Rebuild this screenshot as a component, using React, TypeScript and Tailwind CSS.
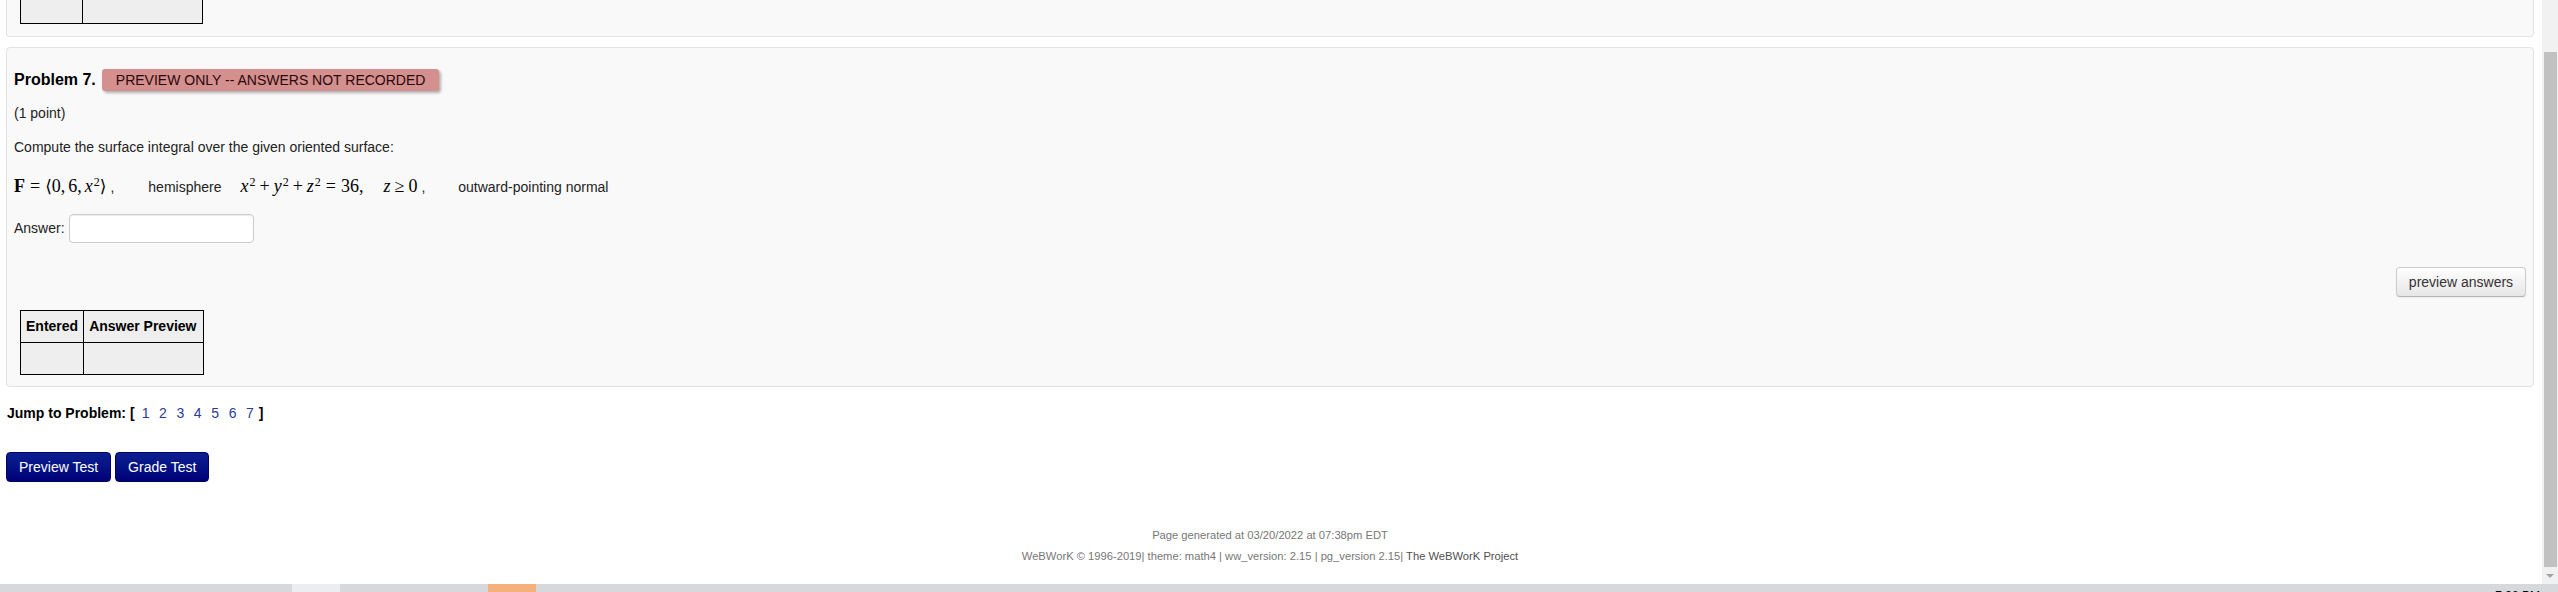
import React from "react";

const mathFont = "font-['Liberation_Serif','DejaVu_Serif',serif] text-[18px] text-black";

function Sq({ v }: { v: string }) {
  return (
    <>
      <i>{v}</i>
      <sup className="ml-[1px] text-[12px]">2</sup>
    </>
  );
}

export default function App() {
  const problems = [1, 2, 3, 4, 5, 6, 7];

  return (
    <div className="w-[2558px] h-[592px] overflow-hidden bg-white flex flex-col font-['Liberation_Sans',Arial,sans-serif] text-[#222]">
      <div className="flex h-[584px]">
        <main className="flex-1 pl-[6px] pr-[8px]">
          {/* tail of the previous problem */}
          <div className="h-[37px] bg-[#f9f9f9] border border-t-0 border-[#e3e3e3] rounded-b-[4px] pl-[13px]">
            <div className="flex">
              <div className="w-[63px] h-[24px] bg-[#eeeeee] border border-t-0 border-black" />
              <div className="w-[120px] h-[24px] bg-[#eeeeee] border border-t-0 border-l-0 border-black" />
            </div>
          </div>

          {/* problem 7 */}
          <div className="mt-[10px] h-[340px] bg-[#f9f9f9] border border-[#e3e3e3] rounded-[4px] px-[7px] pt-[21px]">
            <div className="flex items-center h-[22px]">
              <span className="text-[16px] font-bold text-black">Problem 7.</span>
              <span className="ml-[6px] h-[22px] px-[14px] bg-[#d48f8f] text-[#2a0808] text-[14px] leading-[22px] rounded-[3px] shadow-[2px_2px_3px_rgba(0,0,0,0.3)]">
                PREVIEW ONLY -- ANSWERS NOT RECORDED
              </span>
            </div>

            <div className="mt-[12px] h-[20px] leading-[20px] text-[14px]">(1 point)</div>

            <div className="mt-[14px] h-[20px] leading-[20px] text-[14px]">
              Compute the surface integral over the given oriented surface:
            </div>

            <div className="mt-[17px] h-[24px] leading-[24px] text-[14px] whitespace-nowrap">
              <span className={mathFont}>
                <b className="not-italic">F</b>
                <span className="mx-[5px]">=</span>
                <span className="font-['DejaVu_Serif',serif] text-[17px]">⟨</span>
                0,<span className="ml-[3px]">6</span>,<span className="ml-[3px]"><Sq v="x" /></span>
                <span className="font-['DejaVu_Serif',serif] text-[17px]">⟩</span>
              </span>
              <span className="ml-[4px]">,</span>
              <span className="ml-[34px]">hemisphere</span>
              <span className={`${mathFont} ml-[19px]`}>
                <Sq v="x" />
                <span className="mx-[4px]">+</span>
                <Sq v="y" />
                <span className="mx-[4px]">+</span>
                <Sq v="z" />
                <span className="mx-[5px]">=</span>
                36,
              </span>
              <span className={`${mathFont} ml-[20px]`}>
                <i>z</i>
                <span className="mx-[4px]">≥</span>0
              </span>
              <span className="ml-[4px]">,</span>
              <span className="ml-[33px]">outward-pointing normal</span>
            </div>

            <div className="mt-[16px] flex items-center h-[29px] text-[14px]">
              <span>Answer:</span>
              <input
                type="text"
                className="ml-[4px] w-[185px] h-[29px] bg-white border border-[#cccccc] rounded-[4px] shadow-[inset_0_1px_1px_rgba(0,0,0,0.075)] outline-none"
              />
            </div>

            <div className="mt-[24px] flex justify-end">
              <button className="w-[130px] h-[30px] text-[14px] text-[#333] rounded-[4px] border border-[#cccccc] border-b-[#b3b3b3] bg-gradient-to-b from-white to-[#e6e6e6] shadow-[inset_0_1px_0_rgba(255,255,255,0.2),0_1px_2px_rgba(0,0,0,0.05)]">
                preview answers
              </button>
            </div>

            <table className="mt-[13px] ml-[6px] border-collapse text-[14px] text-black">
              <thead>
                <tr className="h-[32px] bg-[#eeeeee]">
                  <th className="w-[62px] border border-black px-[5px] font-bold text-left">Entered</th>
                  <th className="w-[120px] border border-black px-[5px] font-bold text-left">Answer Preview</th>
                </tr>
              </thead>
              <tbody>
                <tr className="h-[32px] bg-[#eeeeee]">
                  <td className="border border-black" />
                  <td className="border border-black" />
                </tr>
              </tbody>
            </table>
          </div>

          {/* jump links */}
          <div className="mt-[16px] h-[20px] flex items-center pl-[1px] text-[14px] font-bold text-black">
            <span>Jump to Problem:</span>
            <span className="ml-[4px]">[</span>
            <span className="ml-[7px] flex gap-[9.6px] font-normal text-[#2a3b9b]">
              {problems.map((n) => (
                <a key={n} href="#">
                  {n}
                </a>
              ))}
            </span>
            <span className="ml-[5px]">]</span>
          </div>

          <div className="mt-[29px] flex gap-[4px]">
            <button className="h-[30px] px-[12px] text-[14px] text-white rounded-[4px] border border-[#00005e] bg-gradient-to-b from-[#0d1f90] to-[#000078]">
              Preview Test
            </button>
            <button className="h-[30px] px-[12px] text-[14px] text-white rounded-[4px] border border-[#00005e] bg-gradient-to-b from-[#0d1f90] to-[#000078]">
              Grade Test
            </button>
          </div>

          <footer className="mt-[44px] text-center text-[11.2px] text-[#777]">
            <div className="h-[18px] leading-[18px]">Page generated at 03/20/2022 at 07:38pm EDT</div>
            <div className="mt-[3px] h-[18px] leading-[18px]">
              WeBWorK © 1996-2019| theme: math4 | ww_version: 2.15 | pg_version 2.15|{" "}
              <a href="#" className="text-[#505050]">
                The WeBWorK Project
              </a>
            </div>
          </footer>
        </main>

        {/* page scrollbar */}
        <div className="w-[16px] bg-[#f1f1f1] flex flex-col">
          <div className="h-[52px]" />
          <div className="h-[515px] ml-[2px] mr-[1px] bg-[#c1c1c1]" />
          <div className="flex-1 flex items-center justify-center">
            <div className="w-0 h-0 border-l-[4px] border-r-[4px] border-t-[4px] border-l-transparent border-r-transparent border-t-[#a3a3a3]" />
          </div>
        </div>
      </div>

      {/* desktop taskbar, mostly out of view */}
      <div className="h-[8px] bg-[#d6d9dc] flex overflow-hidden">
        <div className="ml-[292px] w-[48px] bg-[#ebedef]" />
        <div className="ml-[148px] w-[48px] bg-[#f6b07c]" />
        <div className="ml-auto mr-[18px] pt-[6px] text-[12px] leading-[12px] text-black">7:38 PM</div>
      </div>
    </div>
  );
}
